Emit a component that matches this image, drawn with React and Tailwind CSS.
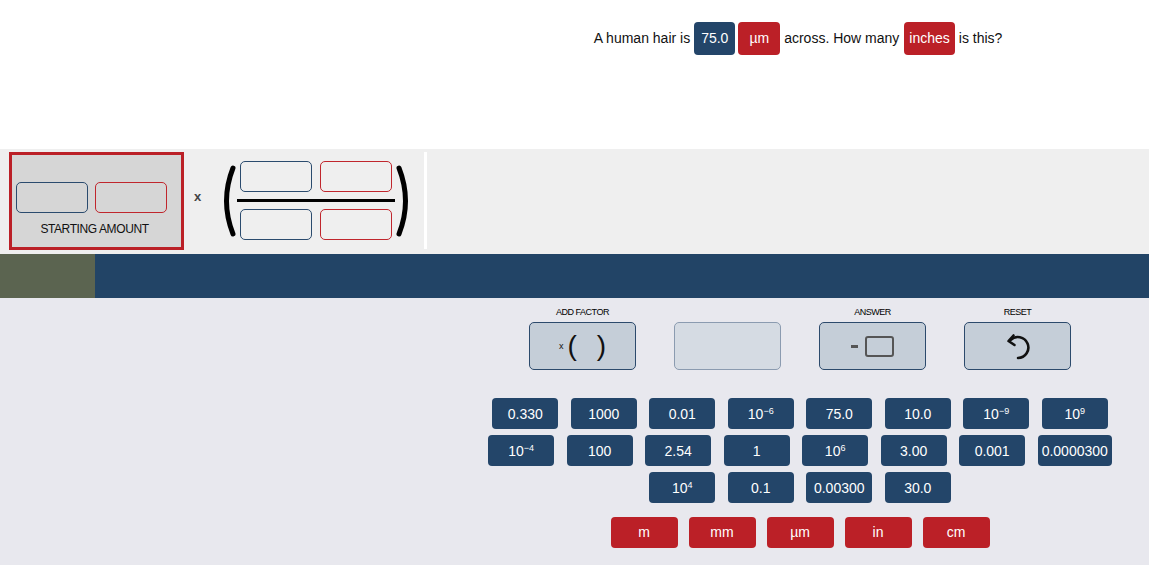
import React from 'react';

const BLUE = 'bg-[#234569]';

function Sup({ base = '10', exp }) {
  return (
    <span>
      {base}
      <sup className="text-[9px] -top-[5px]">{exp}</sup>
    </span>
  );
}

function Paren({ flip }) {
  return (
    <svg width="18" height="74" viewBox="0 0 18 74" className={flip ? 'scale-x-[-1]' : ''}>
      <path d="M14 4 Q1 37 14 70" fill="none" stroke="#000" strokeWidth="5" strokeLinecap="round" />
    </svg>
  );
}

function Slot({ red }) {
  return (
    <div
      className={`w-[72px] h-[31px] rounded-[5px] border ${
        red ? 'border-[#c0262d]' : 'border-[#2b4b6e]'
      }`}
    />
  );
}

const row1 = ['0.330', '1000', '0.01', <Sup exp="−6" />, '75.0', '10.0', <Sup exp="−9" />, <Sup exp="9" />];
const row2 = [<Sup exp="−4" />, '100', '2.54', '1', <Sup exp="6" />, '3.00', '0.001', '0.0000300'];
const row3 = [<Sup exp="4" />, '0.1', '0.00300', '30.0'];
const units = ['m', 'mm', 'µm', 'in', 'cm'];

function NumRow({ items }) {
  return (
    <div className="flex justify-center gap-x-[12.5px]">
      {items.map((v, i) => (
        <button
          key={i}
          className={`${BLUE} min-w-[66px] h-[31px] px-[4px] rounded-[4px] text-white text-[14px] leading-none`}
        >
          {v}
        </button>
      ))}
    </div>
  );
}

function ActionButton({ label, children, disabled }) {
  return (
    <div className="flex flex-col items-center w-[107px]">
      <div className="h-[13px] text-[9px] tracking-[-0.5px] text-black leading-none pt-[1px]">{label}</div>
      <div
        className={`mt-[2px] w-[107px] h-[48px] rounded-[5px] border flex items-center justify-center ${
          disabled ? 'bg-[#d5dbe3] border-[#8b9bb0]' : 'bg-[#c5ced8] border-[#2c4a6c]'
        }`}
      >
        {children}
      </div>
    </div>
  );
}

export default function App() {
  return (
    <div className="w-[1149px] h-[565px] overflow-hidden bg-white font-['Liberation_Sans',Arial,sans-serif] text-[#111]">
      {/* pregunta */}
      <div className="h-[149px] flex">
        <div className="w-[447px] shrink-0" />
        <div className="flex-1 flex justify-center pt-[22px]">
          <div className="flex items-center h-[33px] text-[14px] gap-[3px]">
            <span className="mr-[1px]">A human hair is</span>
            <span className={`${BLUE} text-white rounded-[4px] h-[33px] px-[7px] flex items-center`}>75.0</span>
            <span className="bg-[#bb2027] text-white rounded-[4px] h-[33px] px-[11px] flex items-center">µm</span>
            <span className="ml-[1px] mr-[2px]">across. How many</span>
            <span className="bg-[#bb2027] text-white rounded-[4px] h-[33px] px-[5px] flex items-center">inches</span>
            <span className="ml-[1px]">is this?</span>
          </div>
        </div>
      </div>

      {/* area de factores */}
      <div className="h-[105px] bg-[#efefef] flex items-start pl-[9px] pt-[3px]">
        <div className="w-[175px] h-[98px] bg-[#d6d6d6] border-[3px] border-[#bb2027] flex flex-col pt-[27px] pl-[4px]">
          <div className="flex gap-[7px]">
            <Slot />
            <Slot red />
          </div>
          <div className="mt-[7px] text-[12px] tracking-[-0.4px] text-[#111] text-center pr-[8px]">STARTING AMOUNT</div>
        </div>
        <div className="ml-[10px] mt-[35px] text-[13px] font-bold text-[#444]">x</div>
        <div className="ml-[18px] mt-[9px] flex items-center">
          <Paren />
          <div className="flex flex-col items-center">
            <div className="flex gap-[8px]">
              <Slot />
              <Slot red />
            </div>
            <div className="w-[158px] h-[3px] bg-black my-[7px]" />
            <div className="flex gap-[8px]">
              <Slot />
              <Slot red />
            </div>
          </div>
          <Paren flip />
        </div>
        <div className="ml-[11px] w-[3px] h-[97px] bg-white" />
      </div>

      {/* barra */}
      <div className="h-[44px] bg-[#224466] flex">
        <div className="w-[95px] bg-[#5b6450]" />
      </div>

      {/* controles */}
      <div className="h-[267px] bg-[#e8e8ee] flex">
        <div className="w-[451px] shrink-0" />
        <div className="flex-1 flex flex-col items-center pt-[9px]">
          <div className="flex gap-[38px]">
            <ActionButton label="ADD FACTOR">
              <span className="text-[9px] mr-[4px] mt-[2px]">x</span>
              <span className="text-[28px] leading-none">(</span>
              <span className="w-[20px]" />
              <span className="text-[28px] leading-none">)</span>
            </ActionButton>
            <ActionButton label="" disabled />
            <ActionButton label="ANSWER">
              <span className="w-[7px] h-[3px] bg-[#555] mr-[7px]" />
              <span className="w-[29px] h-[21px] border-2 border-[#555] rounded-[3px]" />
            </ActionButton>
            <ActionButton label="RESET">
              <svg width="26" height="29" viewBox="0 0 26 29" fill="none" stroke="#111" strokeWidth="2.6" strokeLinecap="round" strokeLinejoin="round">
                <path d="M5.5 8 A10.5 10.5 0 1 1 13 26" />
                <path d="M8.5 3.5 L3.5 9 L9.5 13" />
              </svg>
            </ActionButton>
          </div>

          <div className="mt-[28px] flex flex-col gap-[6px]">
            <NumRow items={row1} />
            <NumRow items={row2} />
            <NumRow items={row3} />
          </div>

          <div className="mt-[14px] flex gap-[11px]">
            {units.map((u) => (
              <button key={u} className="bg-[#bb2027] w-[67px] h-[31px] rounded-[4px] text-white text-[14px]">
                {u}
              </button>
            ))}
          </div>
        </div>
      </div>
    </div>
  );
}
